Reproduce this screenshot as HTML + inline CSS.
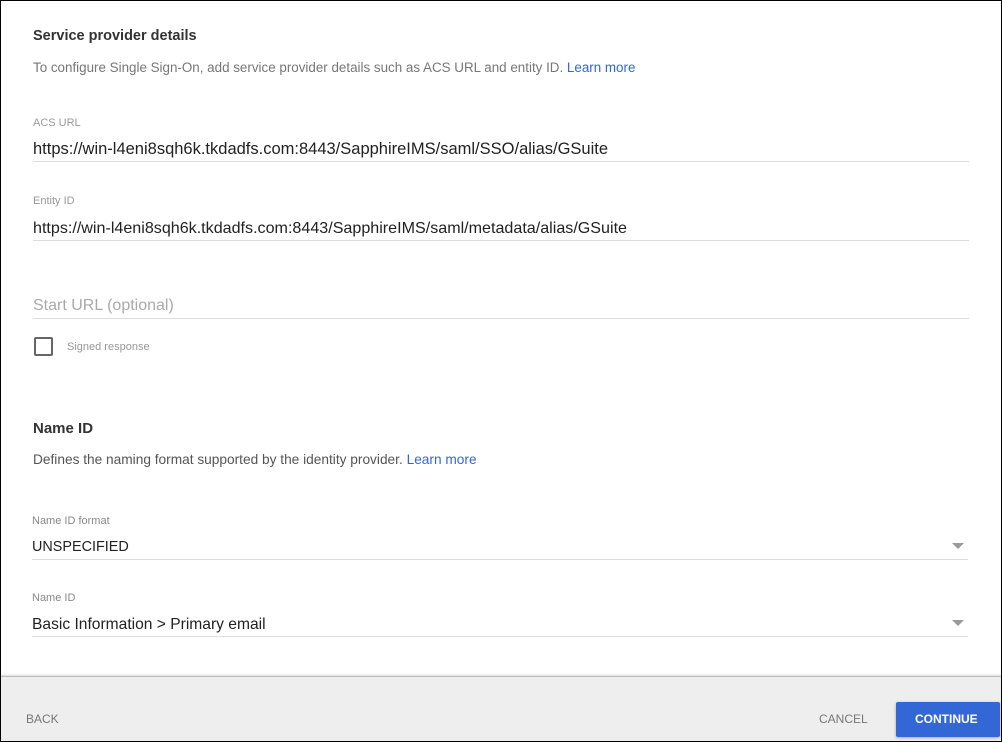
<!DOCTYPE html><html><head><style>
body{margin:0;width:1002px;height:742px;position:relative;overflow:hidden;font-family:"Liberation Sans",sans-serif;background:#fff}
.frame{position:absolute;left:0;top:0;width:1000px;height:740px;border:1px solid #000;z-index:5}
.t{position:absolute;white-space:nowrap;line-height:1}
.line{position:absolute;height:1px;background:#ddd}
.arrow{position:absolute;width:0;height:0;border-left:6px solid transparent;border-right:6px solid transparent;border-top:6px solid #999}
a{color:#3367d6;text-decoration:none}
</style></head><body><div class="frame"></div>
<div class="t" style="left:33px;top:29px;font-size:14.5px;font-weight:bold;color:#333">Service provider details</div>
<div class="t" style="left:33px;top:61px;font-size:13.4px;color:#777">To configure Single Sign-On, add service provider details such as ACS URL and entity ID. <a>Learn more</a></div>
<div class="t" style="left:33px;top:118px;font-size:11px;color:#999">ACS URL</div>
<div class="t" style="left:33px;top:141px;font-size:16.5px;color:#222">https://win-l4eni8sqh6k.tkdadfs.com:8443/SapphireIMS/saml/SSO/alias/GSuite</div>
<div class="line" style="left:33px;top:161px;width:936px"></div>
<div class="t" style="left:33px;top:196px;font-size:11px;color:#999">Entity ID</div>
<div class="t" style="left:33px;top:220px;font-size:16.1px;color:#222">https://win-l4eni8sqh6k.tkdadfs.com:8443/SapphireIMS/saml/metadata/alias/GSuite</div>
<div class="line" style="left:33px;top:240px;width:936px"></div>
<div class="t" style="left:33px;top:298px;font-size:16px;color:#aaa">Start URL (optional)</div>
<div class="line" style="left:33px;top:318px;width:936px"></div>
<div style="position:absolute;left:34px;top:337px;width:15px;height:15px;border:2px solid #666;border-radius:2px"></div>
<div class="t" style="left:67px;top:342px;font-size:11px;color:#999">Signed response</div>
<div class="t" style="left:33px;top:421px;font-size:15px;font-weight:bold;color:#333">Name ID</div>
<div class="t" style="left:33px;top:453px;font-size:13.7px;color:#555">Defines the naming format supported by the identity provider. <a>Learn more</a></div>
<div class="t" style="left:32px;top:516px;font-size:11px;color:#888">Name ID format</div>
<div class="t" style="left:32px;top:540px;font-size:14.4px;color:#222">UNSPECIFIED</div>
<div class="arrow" style="left:952px;top:543px"></div>
<div class="line" style="left:32px;top:559px;width:936px"></div>
<div class="t" style="left:32px;top:593px;font-size:11px;color:#888">Name ID</div>
<div class="t" style="left:32px;top:617px;font-size:15.6px;color:#222">Basic Information &gt; Primary email</div>
<div class="arrow" style="left:952px;top:620px"></div>
<div class="line" style="left:32px;top:636px;width:936px"></div>
<div style="position:absolute;left:1px;top:676px;width:1000px;height:65px;background:#eee;border-top:1px solid #bbb;box-shadow:0 -1px 2px rgba(0,0,0,.15)"></div>
<div class="t" style="left:26px;top:713px;font-size:12px;color:#777">BACK</div>
<div class="t" style="left:819px;top:713px;font-size:12px;color:#777">CANCEL</div>
<div style="position:absolute;left:896px;top:702px;width:104px;height:35px;background:#3367d6;border-radius:2px;box-shadow:0 1px 3px rgba(0,0,0,.3)"></div>
<div class="t" style="left:915px;top:713px;font-size:12px;font-weight:bold;color:#fff">CONTINUE</div>
</body></html>
